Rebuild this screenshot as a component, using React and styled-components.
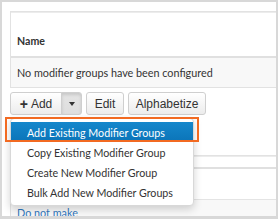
import React from 'react'
import styled, { createGlobalStyle } from 'styled-components'

const Global = createGlobalStyle`
  html, body { margin: 0; padding: 0; background: #fff; }
  body { font-family: Lato, "Open Sans", Arial, sans-serif; color: #333; }
`

const Frame = styled.div`
  width: 278px;
  height: 219px;
  box-sizing: border-box;
  border: 2px solid #d8d8d8;
  border-bottom-width: 3px;
  overflow: hidden;
  background: #fff;
  position: relative;
`

const Panel = styled.div`
  margin: ${p => p.top}px 0 0 8px;
  width: 290px;
  border: 1px solid #e2e2e2;
  border-right: none;
  box-sizing: border-box;
`

const Head = styled.div`
  height: ${p => p.h}px;
  border-top: 1px solid #ececec;
  border-bottom: 2px solid #e0e0e0;
  box-sizing: border-box;
  display: flex;
  align-items: flex-end;
  padding: 0 0 9px 6px;
  font-size: 10.6px;
  font-weight: 700;
`

const Row = styled.div`
  height: ${p => p.h}px;
  background: ${p => (p.shade ? '#f8f8f8' : '#fff')};
  border-top: ${p => (p.line ? '1px solid #e4e4e4' : 'none')};
  box-sizing: border-box;
  display: flex;
  align-items: ${p => p.align || 'center'};
  padding-left: 6px;
  font-size: 10.8px;
`

const Link = styled.span`
  color: #2f76bd;
  font-size: 10.8px;
  margin-top: ${p => p.offset || 0}px;
`

const Toolbar = styled.div`
  position: relative;
  display: flex;
  gap: 4px;
  margin: 4px 0 0 8px;
`

const Group = styled.div`
  display: flex;
`

const Button = styled.div`
  width: ${p => p.w}px;
  height: 23px;
  box-sizing: border-box;
  display: flex;
  align-items: center;
  justify-content: center;
  gap: 3px;
  font-family: "Liberation Sans", Arial, sans-serif;
  font-size: 12px;
  color: #333;
  border: 1px solid #cfcfcf;
  border-radius: ${p => p.radius || '3px'};
  margin-left: ${p => (p.join ? '-1px' : '0')};
  background: ${p =>
    p.active
      ? 'linear-gradient(#e4e4e4, #dedede)'
      : 'linear-gradient(#ffffff, #ececec)'};
  box-shadow: ${p => (p.active ? 'inset 0 2px 3px rgba(0,0,0,0.12)' : 'none')};
`

const Plus = styled.span`
  font-weight: 700;
  font-size: 14px;
  line-height: 1;
`

const Caret = styled.span`
  width: 0;
  height: 0;
  border-left: 3px solid transparent;
  border-right: 3px solid transparent;
  border-top: 4px solid #333;
`

const Menu = styled.ul`
  position: absolute;
  top: 26px;
  left: 0;
  width: 182px;
  margin: 0;
  padding: 3px 0 3px;
  list-style: none;
  background: #fff;
  border: 1px solid #d8d8d8;
  border-radius: 4px;
  box-shadow: 0 3px 8px rgba(0,0,0,0.18);
  z-index: 2;
`

const Item = styled.li`
  height: 20px;
  display: flex;
  align-items: center;
  padding-left: 16px;
  font-size: 10.7px;
  white-space: nowrap;
  color: ${p => (p.active ? '#fff' : '#333')};
  background: ${p => (p.active ? 'linear-gradient(#1587cc, #0b74b8)' : 'transparent')};
`

const Callout = styled.div`
  position: absolute;
  left: 3px;
  top: 115px;
  width: 194px;
  height: 25px;
  box-sizing: border-box;
  border: 2px solid #f26a21;
  z-index: 3;
`

export default function App() {
  return (
    <>
      <Global />
      <Frame>
        <Panel top={9}>
          <Head h={46}>Name</Head>
          <Row h={29} shade>No modifier groups have been configured</Row>
        </Panel>
        <Toolbar>
          <Group>
            <Button w={52} radius="3px 0 0 3px">
              <Plus>+</Plus> Add
            </Button>
            <Button w={21} radius="0 3px 3px 0" join active>
              <Caret />
            </Button>
          </Group>
          <Button w={38}>Edit</Button>
          <Button w={78}>Alphabetize</Button>
          <Menu>
            <Item active>Add Existing Modifier Groups</Item>
            <Item>Copy Existing Modifier Group</Item>
            <Item>Create New Modifier Group</Item>
            <Item>Bulk Add New Modifier Groups</Item>
          </Menu>
        </Toolbar>
        <Panel top={40}>
          <Head h={13} />
          <Row h={30} />
          <Row h={30} shade line align="flex-start">
            <Link offset={6}>Do not make</Link>
          </Row>
        </Panel>
        <Callout />
      </Frame>
    </>
  )
}
